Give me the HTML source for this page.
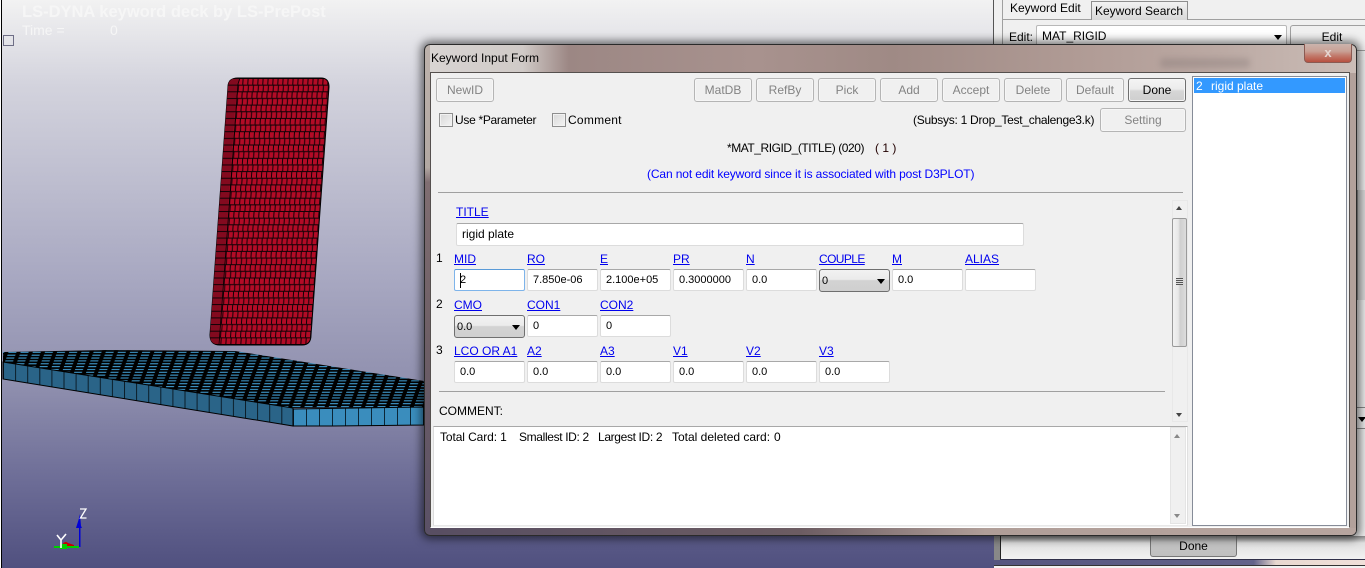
<!DOCTYPE html>
<html><head><meta charset="utf-8"><title>Keyword Input Form</title>
<style>
html,body{margin:0;padding:0;width:1365px;height:568px;overflow:hidden;background:#f0f0f0}
body{position:relative;font:12px/16px "Liberation Sans",sans-serif;color:#000}
.a{position:absolute;white-space:nowrap}
.b{position:absolute;box-sizing:border-box;width:58px;height:24px;border:1px solid #b5b5b5;border-radius:3px;background:#f0f0f0;color:#838383;text-align:center;line-height:22px;box-shadow:inset 0 0 0 1px #f6f6f6}
.l{position:absolute;color:#0000ee;text-decoration:underline;white-space:nowrap}
.i{position:absolute;box-sizing:border-box;width:71px;height:22px;background:#fff;border:1px solid #dcdcdc;border-top-color:#a8a8a8;border-radius:2px;padding-left:5px;line-height:21px;white-space:nowrap;font-size:11px}
.c{position:absolute;box-sizing:border-box;width:71px;height:23px;border:1px solid #6f6f6f;border-radius:3px;background:linear-gradient(#f2f2f2,#ebebeb 45%,#d3d3d3 50%,#cfcfcf);padding-left:2px;line-height:23px;font-size:11px}
.c i{position:absolute;right:4px;top:9px;width:0;height:0;border:4px solid transparent;border-top:5px solid #000;border-bottom:0}
.k{position:absolute;box-sizing:border-box;width:14px;height:14px;border:1px solid #8e8e8e;background:linear-gradient(135deg,#d8d8d8,#f4f4f4);box-shadow:inset 0 0 0 1px #f2f2f2}
.h{position:absolute;height:1px;background:#a0a0a0}
.u{position:absolute;width:0;height:0;border:3.5px solid transparent;border-bottom:4px solid #555;border-top:0}
.d{position:absolute;width:0;height:0;border:3.5px solid transparent;border-top:4px solid #555;border-bottom:0}
</style></head><body>

<!-- 3D viewport -->
<div class="a" style="left:0;top:0;width:994px;height:568px;background:linear-gradient(#f2f2f2 0,#d3d3dd 15%,#a9a9c2 48%,#8f8fae 68%,#6c6c96 85%,#50507f 100%)"></div>
<div class="a" style="left:0;top:0;width:1px;height:568px;background:#fff"></div>
<div class="a" style="left:1px;top:0;width:1px;height:568px;background:#000"></div>
<div class="a" style="left:993px;top:0;width:1px;height:44px;background:#555"></div>
<div class="a" style="left:22px;top:2px;font-size:16.5px;line-height:20px;font-weight:bold;color:#f6f6f6">LS-DYNA keyword deck by LS-PrePost</div>
<div class="a" style="left:22px;top:21px;font-size:14px;line-height:18px;color:#f6f6f6">Time =</div>
<div class="a" style="left:110px;top:21px;font-size:14px;line-height:18px;color:#f6f6f6">0</div>
<div class="a" style="left:3px;top:35px;width:9px;height:9px;border:1px solid #6e6e86"></div>

<svg class="a" style="left:0;top:0" width="430" height="568" viewBox="0 0 430 568">
<defs>
<pattern id="red" width="5" height="13.3" patternUnits="userSpaceOnUse" patternTransform="skewX(-3.9) translate(228 78)">
<rect width="5" height="13.3" fill="#b20b26"/>
<rect x="0" y="0" width="1" height="6.65" fill="#100206"/>
<rect x="0.8" y="6.65" width="1" height="6.65" fill="#100206"/>
<rect width="5" height="1" fill="#100206"/><rect y="6.65" width="5" height="1" fill="#100206"/>
</pattern>
<pattern id="redd" width="9" height="6.65" patternUnits="userSpaceOnUse" patternTransform="skewX(-3.9) translate(228 78)">
<rect width="9" height="6.65" fill="#830a1f"/><rect width="9" height="1" fill="#100206"/>
</pattern>
<pattern id="dash" width="12.15" height="2.85" patternUnits="userSpaceOnUse" patternTransform="skewX(-20) translate(2 351)">
<rect width="12.15" height="2.85" fill="#000"/><rect x="1" y="0.8" width="8" height="1.1" fill="#3f97c9"/>
</pattern>
<pattern id="sideL" width="12.1" height="60" patternUnits="userSpaceOnUse" patternTransform="translate(3 0)">
<rect width="12.1" height="60" fill="#2a6488"/><rect width="1" height="60" fill="#0b1d28"/>
</pattern>
<pattern id="sideR" width="13" height="60" patternUnits="userSpaceOnUse" patternTransform="translate(293 0)">
<rect width="13" height="60" fill="#3a8dbd"/><rect width="1" height="60" fill="#0b2636"/>
</pattern>
</defs>
<!-- red plate -->
<path d="M228 87 Q228 78 238 78 L321 78 Q329 78 329 87 L311 335 Q311 345 302 345 L220 345 Q210 345 210 335 Z" fill="url(#red)" stroke="#000" stroke-width="1"/>
<path d="M228 87 Q228 78 238 78 L240 78 L238 84 L235 110 L219 344 Q210 345 210 335 Z" fill="url(#redd)"/>
<path d="M238 78 L240 78 L238 84 L219 345" fill="none" stroke="#000" stroke-width=".8"/>
<!-- steel plate -->
<path d="M3 352 L107 350 L235 351 L424 381 L424 407 L293 408 L3 362 Z" fill="url(#dash)"/>
<path d="M3 362 L293 408 L293 426 L3 379 Z" fill="url(#sideL)" stroke="#000" stroke-width="1"/>
<path d="M293 409 L424 407 L424 425 L333 426 L293 426 Z" fill="url(#sideR)" stroke="#000" stroke-width="1"/>
<!-- triad -->
<path d="M79 547 L79 528 L76 528 L78.5 520 L80 514 L81 526 L82 528 L80.5 528 L80.5 547 Z" fill="#0000d8"/>
<path d="M62 545 Q65 540 68 543 L74 545 L74 546 L62 546 Z" fill="#c80000"/>
<rect x="54" y="546" width="25" height="2" fill="#00d000"/>
<rect x="60" y="544" width="7" height="5" fill="#00d000"/>
<path d="M80 509 H86 L80.5 518 H86.5" fill="none" stroke="#fff" stroke-width="1.3"/>
<path d="M57 535 L61 540 L66 534 M61 540 V548" fill="none" stroke="#fff" stroke-width="1.6"/>
</svg>

<!-- back window -->
<div class="a" style="left:994px;top:0;width:371px;height:568px;background:#f0f0f0"></div>
<div class="a" style="left:1002px;top:19px;width:363px;height:1px;background:#a0a0a0"></div>
<div class="a" style="left:1002px;top:0;width:1px;height:44px;background:#a0a0a0"></div>
<div class="a" style="left:1010px;top:0;">Keyword Edit</div>
<div class="a" style="left:1091px;top:1px;width:95px;height:18px;border:1px solid #8e8e8e;border-bottom:0;background:linear-gradient(#f2f2f2,#d8d8d8);text-indent:3px;line-height:18px">Keyword Search</div>
<div class="a" style="left:1009px;top:29px">Edit:</div>
<div class="a" style="left:1036px;top:25px;width:249px;height:20px;background:#fff;border:1px solid #b8b8b8;border-radius:2px;text-indent:5px;line-height:20px">MAT_RIGID<span style="position:absolute;right:4px;top:9px;width:0;height:0;border:4px solid transparent;border-top:5px solid #000;border-bottom:0"></span></div>
<div class="a" style="left:1290px;top:25px;width:85px;height:24px;border:1px solid #a0a0a0;border-radius:3px;background:#f0f0f0;text-align:center;line-height:22px;text-indent:-2px"><span style="margin-left:-1px">Edit</span></div>

<!-- back window right strip and bottom -->
<div class="a" style="left:1357px;top:60px;width:8px;height:476px;background:#ececec"></div>
<div class="a" style="left:1357px;top:407px;width:8px;height:1px;background:#888"></div>
<div class="a" style="left:1357px;top:428px;width:8px;height:1px;background:#888"></div>
<div class="a" style="left:1358px;top:417px;width:0;height:0;border:4px solid transparent;border-top:5px solid #000;border-bottom:0"></div>
<div class="a" style="left:1357px;top:190px;width:8px;height:110px;background:#d8d8d8;border-left:1px solid #999"></div>
<div class="a" style="left:1001px;top:536px;width:364px;height:23px;background:linear-gradient(#8a8a8a,#e0e0e0 30%,#f2f2f2)"></div>
<div class="a" style="left:1000px;top:536px;width:1px;height:23px;background:#222"></div>
<div class="a" style="left:1150px;top:536px;width:85px;height:20px;border:1px solid #777;border-top:0;border-radius:0 0 3px 3px;background:linear-gradient(#9c9c9c,#c4c4c4 30%,#c0c0c0);text-align:center;line-height:20px">Done</div>
<div class="a" style="left:994px;top:559px;width:371px;height:1px;background:#30304a"></div>
<div class="a" style="left:994px;top:560px;width:371px;height:5px;background:linear-gradient(90deg,#55557f 0,#63638a 70%,#e8d8d0 76%,#f0e0da 100%)"></div>
<div class="a" style="left:994px;top:565px;width:371px;height:3px;background:#f2f2f2;border-top:1px solid #333;box-sizing:border-box"></div>
<div class="a" style="left:994px;top:536px;width:6px;height:24px;background:#888"></div>

<!-- modal shadow -->
<div class="a" style="left:424px;top:44px;width:933px;height:492px;border-radius:6px;box-shadow:0 0 9px 3px rgba(0,0,0,.55)"></div>
<!-- modal frame -->
<div class="a" style="left:424px;top:44px;width:931px;height:490px;border:1px solid #2a2a2a;border-radius:6px;background:linear-gradient(#bdb2ac 0,#b2a8a2 25%,#806e72 28%,#6e5f66 60%,#5a5066 100%);overflow:hidden">
  <div style="position:absolute;left:5px;right:0;top:0;height:28px;background:linear-gradient(90deg,#d8d4d2 0,#d0cac7 10%,#9c8784 15%,#a8928e 35%,#9f8a85 50%,#b09b95 70%,#bba9a3 85%,#cbbdb7 100%)"></div>
  <div style="position:absolute;left:5px;right:0;top:28px;bottom:0;background:linear-gradient(90deg,#7a6a6e 0,#7a6a6e 1%,#b2a19b 1.1%,#b2a19b 100%)"></div>
  <div style="position:absolute;left:5px;right:0;bottom:0;height:7px;background:linear-gradient(90deg,#584e62,#6c5c62 40%,#b09e98 60%,#b7a59f 100%)"></div>
</div>
<div class="a" style="left:1304px;top:44px;width:46px;height:18px;border:1px solid #8a5a52;border-top:0;border-radius:0 0 4px 4px;background:linear-gradient(#cbb3ac,#c9a196 40%,#c27a6c 65%,#b8503f);box-sizing:content-box"></div>
<div class="a" style="left:1304px;top:44px;width:48px;height:18px;text-align:center;color:#e6d6d2;font-weight:bold;font-size:13px;line-height:18px">x</div>
<div class="a" style="left:1160px;top:58px;width:90px;height:10px;background:rgba(110,100,100,.25);border-radius:4px;filter:blur(3px)"></div>
<div class="a" style="left:431px;top:50px;">Keyword Input Form</div>

<!-- modal client -->
<div class="a" style="left:430px;top:72px;width:920px;height:456px;background:#f0f0f0;border:1px solid #55504e;border-bottom:1px solid #fff;box-sizing:border-box"></div>

<div class="b" style="left:436px;top:78px">NewID</div>
<div class="b" style="left:694px;top:78px">MatDB</div>
<div class="b" style="left:756px;top:78px">RefBy</div>
<div class="b" style="left:818px;top:78px">Pick</div>
<div class="b" style="left:880px;top:78px">Add</div>
<div class="b" style="left:942px;top:78px">Accept</div>
<div class="b" style="left:1004px;top:78px">Delete</div>
<div class="b" style="left:1066px;top:78px">Default</div>
<div class="b" style="left:1128px;top:78px;border-color:#6f6f6f;color:#000;background:linear-gradient(#f4f4f4,#ececec 45%,#d6d6d6 55%,#cfcfcf)">Done</div>
<div class="b" style="left:1100px;top:108px;width:86px">Setting</div>

<div class="k" style="left:439px;top:113px"></div>
<div class="a" style="left:455px;top:112px;letter-spacing:-.3px">Use *Parameter</div>
<div class="k" style="left:552px;top:113px"></div>
<div class="a" style="left:568px;top:112px;letter-spacing:.25px">Comment</div>
<div class="a" style="left:913px;top:112px;letter-spacing:-.27px">(Subsys: 1 Drop_Test_chalenge3.k)</div>
<div class="a" style="left:727px;top:140px;letter-spacing:-.45px">*MAT_RIGID_(TITLE) (020)</div>
<div class="a" style="left:875px;top:140px;color:#200">( 1 )</div>
<div class="a" style="left:647px;top:166px;color:#0000ff;letter-spacing:-.12px">(Can not edit keyword since it is associated with post D3PLOT)</div>
<div class="h" style="left:438px;top:192px;width:745px"></div>

<div class="l" style="left:456px;top:204px">TITLE</div>
<div class="i" style="left:456px;top:223px;width:568px;height:23px;font-size:12px">rigid plate</div>

<div class="a" style="left:436px;top:250px">1</div>
<div class="l" style="left:454px;top:251px">MID</div>
<div class="l" style="left:527px;top:251px">RO</div>
<div class="l" style="left:600px;top:251px">E</div>
<div class="l" style="left:673px;top:251px">PR</div>
<div class="l" style="left:746px;top:251px">N</div>
<div class="l" style="left:819px;top:251px;letter-spacing:-.6px">COUPLE</div>
<div class="l" style="left:892px;top:251px">M</div>
<div class="l" style="left:965px;top:251px">ALIAS</div>
<div class="i" style="left:454px;top:269px;border-color:#7eb4ea;border-top-color:#5a9bd8">2<span style="position:absolute;left:5px;top:3px;width:1px;height:15px;background:#000"></span></div>
<div class="i" style="left:527px;top:269px">7.850e-06</div>
<div class="i" style="left:600px;top:269px">2.100e+05</div>
<div class="i" style="left:673px;top:269px">0.3000000</div>
<div class="i" style="left:746px;top:269px">0.0</div>
<div class="c" style="left:819px;top:269px">0<i></i></div>
<div class="i" style="left:892px;top:269px">0.0</div>
<div class="i" style="left:965px;top:269px"></div>

<div class="a" style="left:436px;top:296px">2</div>
<div class="l" style="left:454px;top:297px">CMO</div>
<div class="l" style="left:527px;top:297px">CON1</div>
<div class="l" style="left:600px;top:297px">CON2</div>
<div class="c" style="left:454px;top:315px">0.0<i></i></div>
<div class="i" style="left:527px;top:315px">0</div>
<div class="i" style="left:600px;top:315px">0</div>

<div class="a" style="left:436px;top:342px">3</div>
<div class="l" style="left:454px;top:343px">LCO OR A1</div>
<div class="l" style="left:527px;top:343px">A2</div>
<div class="l" style="left:600px;top:343px">A3</div>
<div class="l" style="left:673px;top:343px">V1</div>
<div class="l" style="left:746px;top:343px">V2</div>
<div class="l" style="left:819px;top:343px">V3</div>
<div class="i" style="left:454px;top:361px">0.0</div>
<div class="i" style="left:527px;top:361px">0.0</div>
<div class="i" style="left:600px;top:361px">0.0</div>
<div class="i" style="left:673px;top:361px">0.0</div>
<div class="i" style="left:746px;top:361px">0.0</div>
<div class="i" style="left:819px;top:361px">0.0</div>

<div class="h" style="left:439px;top:391px;width:726px"></div>
<div class="a" style="left:439px;top:403px">COMMENT:</div>

<!-- form scrollbar -->
<div class="a" style="left:1172px;top:200px;width:16px;height:222px;background:#f0f0f0;border:1px solid #e8e8e8;box-sizing:border-box"></div>
<div class="u" style="left:1176px;top:206px;border-bottom-color:#444"></div>
<div class="a" style="left:1172px;top:218px;width:15px;height:129px;box-sizing:border-box;border:1px solid #9a9a9a;border-radius:2px;background:linear-gradient(90deg,#f2f2f2,#e8e8e8 40%,#cfcfcf 55%,#dcdcdc)"></div>
<div class="a" style="left:1176px;top:278px;width:7px;height:7px;background:repeating-linear-gradient(#555 0,#555 1px,#ddd 1px,#ddd 2px)"></div>
<div class="d" style="left:1176px;top:413px;border-top-color:#444"></div>

<!-- output box -->
<div class="a" style="left:433px;top:426px;width:755px;height:100px;background:#fff;border-top:1px solid #a8a8a8;border-left:1px solid #dcdcdc;border-right:1px solid #e0e0e0;border-bottom:1px solid #e8e8e8;box-sizing:border-box"></div>
<div class="a" style="left:440px;top:429px;letter-spacing:-.1px">Total Card: 1</div>
<div class="a" style="left:519px;top:429px;letter-spacing:-.35px">Smallest ID: 2</div>
<div class="a" style="left:598px;top:429px;letter-spacing:-.35px">Largest ID: 2</div>
<div class="a" style="left:672px;top:429px">Total deleted card:</div>
<div class="a" style="left:774px;top:429px">0</div>
<div class="a" style="left:1170px;top:427px;width:16px;height:97px;background:#f0f0f0;border:1px solid #e4e4e4;box-sizing:border-box"></div>
<div class="u" style="left:1174px;top:434px;border-bottom-color:#888"></div>
<div class="d" style="left:1174px;top:514px;border-top-color:#888"></div>

<!-- id list -->
<div class="a" style="left:1192px;top:76px;width:155px;height:450px;box-sizing:border-box;background:#fff;border:1px solid #868c98"></div>
<div class="a" style="left:1194px;top:78px;width:151px;height:15px;background:#3399ff;color:#fff;line-height:16px;text-indent:2px">2<span style="position:absolute;left:17px;top:0;text-indent:0">rigid plate</span></div>

</body></html>
